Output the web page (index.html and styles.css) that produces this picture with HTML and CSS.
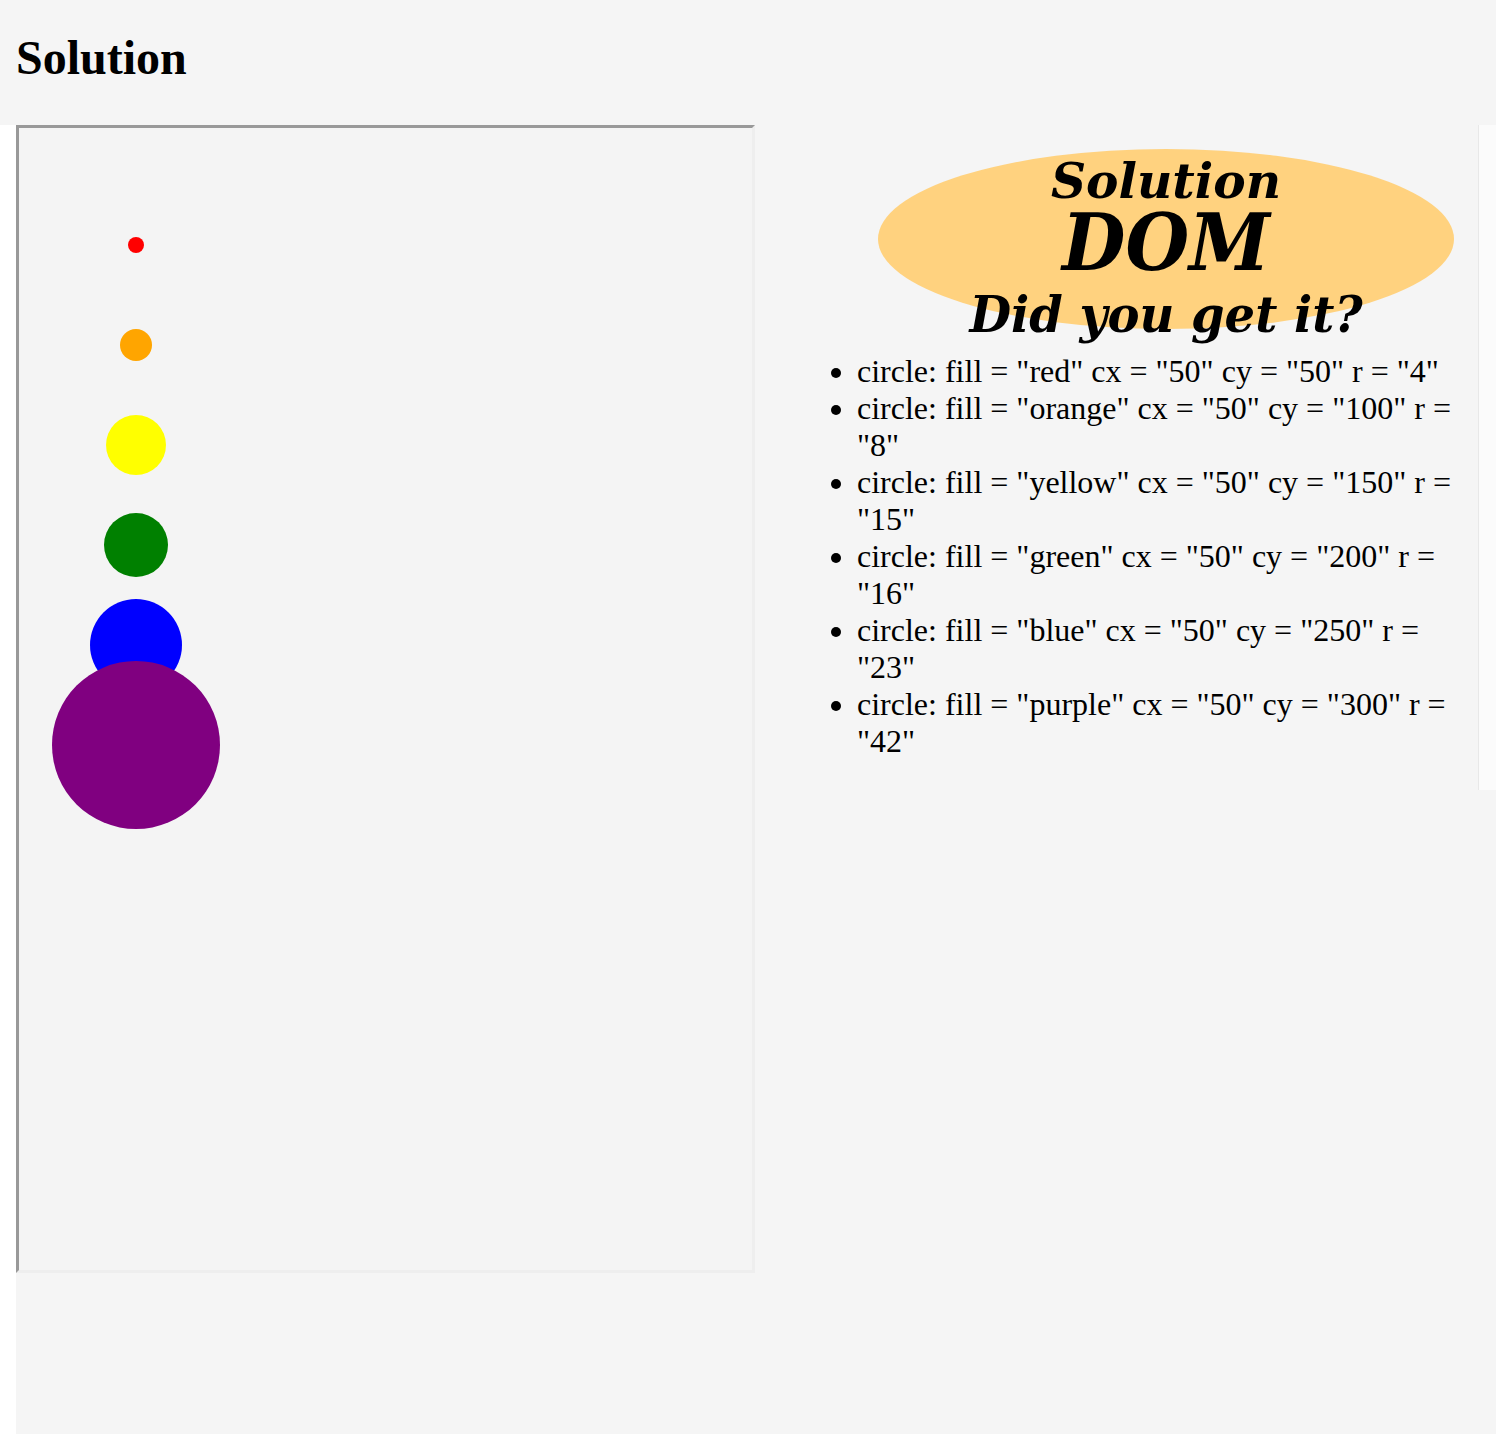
FILE: index.html
```html
<!DOCTYPE html>
<html>
<head>
<meta charset="utf-8">
<title>Solution</title>
<link rel="stylesheet" href="styles.css">
</head>
<body>
<header class="top">
  <h2 class="title">Solution</h2>
</header>
<main class="row">
  <div class="frame">
    <svg class="canvas" width="733" height="1142" viewBox="0 0 733 1142">
      <circle fill="red" cx="117" cy="117" r="8"/>
      <circle fill="orange" cx="117" cy="217" r="16"/>
      <circle fill="yellow" cx="117" cy="317" r="30"/>
      <circle fill="green" cx="117" cy="417" r="32"/>
      <circle fill="blue" cx="117" cy="517" r="46"/>
      <circle fill="purple" cx="117" cy="617" r="84"/>
    </svg>
  </div>
  <section class="panel">
    <svg class="badge" width="661" height="228" viewBox="0 0 661 228">
      <ellipse cx="349" cy="114" rx="288" ry="90" fill="#ffd27f"/>
      <text class="badge-text" x="349" y="73" font-size="49" text-anchor="middle" textLength="230" lengthAdjust="spacingAndGlyphs">Solution</text>
      <text class="badge-text" x="349" y="145" font-size="78" text-anchor="middle" textLength="208" lengthAdjust="spacingAndGlyphs">DOM</text>
      <text class="badge-text" x="349" y="207" font-size="50" text-anchor="middle" textLength="393" lengthAdjust="spacingAndGlyphs">Did you get it?</text>
    </svg>
    <ul class="list">
      <li>circle: fill = "red" cx = "50" cy = "50" r = "4"</li>
      <li>circle: fill = "orange" cx = "50" cy = "100" r = "8"</li>
      <li>circle: fill = "yellow" cx = "50" cy = "150" r = "15"</li>
      <li>circle: fill = "green" cx = "50" cy = "200" r = "16"</li>
      <li>circle: fill = "blue" cx = "50" cy = "250" r = "23"</li>
      <li>circle: fill = "purple" cx = "50" cy = "300" r = "42"</li>
    </ul>
  </section>
  <aside class="side"></aside>
</main>
</body>
</html>
```
FILE: styles.css
```css
html, body {
  margin: 0;
  padding: 0;
}
body {
  background: #ffffff;
  font-family: "Liberation Serif", "Times New Roman", serif;
  font-size: 32px;
  color: #000;
}
.top {
  background: #f5f5f5;
  padding: 30px 16px 40px;
}
.title {
  margin: 0;
  font-size: 48px;
  font-weight: bold;
  line-height: normal;
}
.row {
  display: flex;
  align-items: flex-start;
  margin-left: 16px;
  background: #f5f5f5;
  min-height: 1309px;
}
.frame {
  flex: 0 0 auto;
  width: 733px;
  height: 1142px;
  border: 3px solid;
  border-color: #999999 #eeeeee #eeeeee #999999;
  background: #f4f4f4;
}
.canvas {
  display: block;
}
.panel {
  flex: 0 0 auto;
  width: 661px;
  margin-left: 62px;
}
.badge {
  display: block;
}
.badge-text {
  font-family: "DejaVu Serif", Georgia, serif;
  font-weight: bold;
  font-style: italic;
  fill: #000;
}
.list {
  margin: 0;
  padding-left: 40px;
  line-height: normal;
}
.side {
  flex: 1 1 auto;
  height: 665px;
  border-left: 1px solid #e8e8e8;
  background: #fbfbfb;
}
```
